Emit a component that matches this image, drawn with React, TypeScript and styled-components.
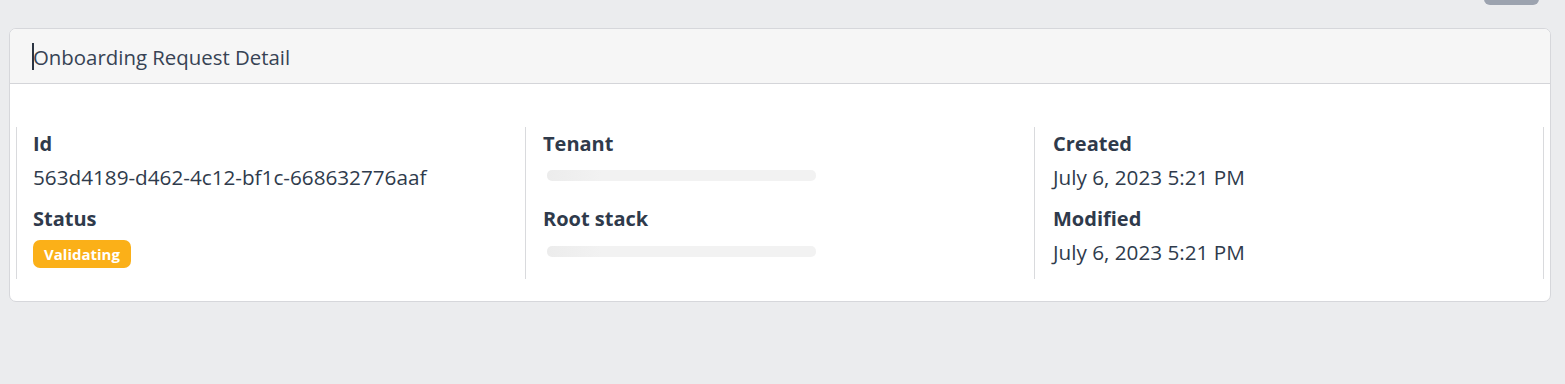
import React from "react";
import styled, { createGlobalStyle } from "styled-components";

const Global = createGlobalStyle`
  html, body { margin: 0; padding: 0; background: #ebecee; }
  body { font-family: "Open Sans", "Noto Sans", Arial, sans-serif; color: #2f3b4c; }
`;

const Page = styled.div`
  padding: 0 14px 0 9px;
  width: 1565px;
  box-sizing: border-box;
`;

const Toolbar = styled.div`
  height: 28px;
  display: flex;
  justify-content: flex-end;
  padding-right: 12px;
  overflow: hidden;
`;

const GhostButton = styled.div`
  width: 55px;
  height: 34px;
  margin-top: -29px;
  border-radius: 6px;
  background: #9ca3af;
`;

const Card = styled.section`
  background: #fff;
  border: 1px solid #d6d7db;
  border-radius: 7px;
  overflow: hidden;
`;

const CardHeader = styled.header`
  height: 54px;
  background: #f6f6f6;
  border-bottom: 1px solid #d4d5d9;
  display: flex;
  align-items: center;
  padding-left: 22px;
`;

const Caret = styled.span`
  width: 2px;
  height: 27px;
  background: #2b3442;
  margin-right: -1px;
`;

const Title = styled.h1`
  margin: 2px 0 0;
  font-size: 20.4px;
  font-weight: 400;
  color: #374354;
`;

const CardBody = styled.div`
  padding: 43px 6px 22px 6px;
`;

const Grid = styled.div`
  display: grid;
  grid-template-columns: repeat(3, 1fr);
  border-right: 1px solid #d9dadd;
`;

const Column = styled.div<{ $inset: number }>`
  border-left: 1px solid #d9dadd;
  padding: 5px 16px 11px ${(p) => p.$inset}px;
  display: flex;
  flex-direction: column;
  & > :last-child { margin-bottom: 0; }
`;

const Label = styled.div`
  font-size: 20px;
  font-weight: 700;
  line-height: 24px;
  color: #2f3a4b;
`;

const Value = styled.div`
  font-size: 20.7px;
  line-height: 26px;
  margin-top: 8px;
  margin-bottom: 17px;
  color: #2f3b4c;
`;

const Skeleton = styled.div<{ $first?: boolean }>`
  width: 269px;
  height: 11px;
  border-radius: 5px;
  margin: ${(p) => (p.$first ? "14px 0 26px 4px" : "15px 0 0 4px")};
  background: linear-gradient(90deg, #ececec 0%, #f2f2f2 20%, #f2f2f2 100%);
`;

const Badge = styled.span<{ $tone: string }>`
  align-self: flex-start;
  margin-top: 9px;
  padding: 0 11px;
  height: 28px;
  line-height: 28px;
  border-radius: 7px;
  background: ${(p) => p.$tone};
  color: #fff;
  font-size: 15px;
  font-weight: 700;
`;

export default function App() {
  return (
    <>
      <Global />
      <Page>
        <Toolbar>
          <GhostButton />
        </Toolbar>
        <Card>
          <CardHeader>
            <Caret />
            <Title>Onboarding Request Detail</Title>
          </CardHeader>
          <CardBody>
            <Grid>
              <Column $inset={16}>
                <Label>Id</Label>
                <Value>563d4189-d462-4c12-bf1c-668632776aaf</Value>
                <Label>Status</Label>
                <Badge $tone="#fbb018">Validating</Badge>
              </Column>
              <Column $inset={17}>
                <Label>Tenant</Label>
                <Skeleton $first />
                <Label>Root stack</Label>
                <Skeleton />
              </Column>
              <Column $inset={18}>
                <Label>Created</Label>
                <Value>July 6, 2023 5:21 PM</Value>
                <Label>Modified</Label>
                <Value>July 6, 2023 5:21 PM</Value>
              </Column>
            </Grid>
          </CardBody>
        </Card>
      </Page>
    </>
  );
}
